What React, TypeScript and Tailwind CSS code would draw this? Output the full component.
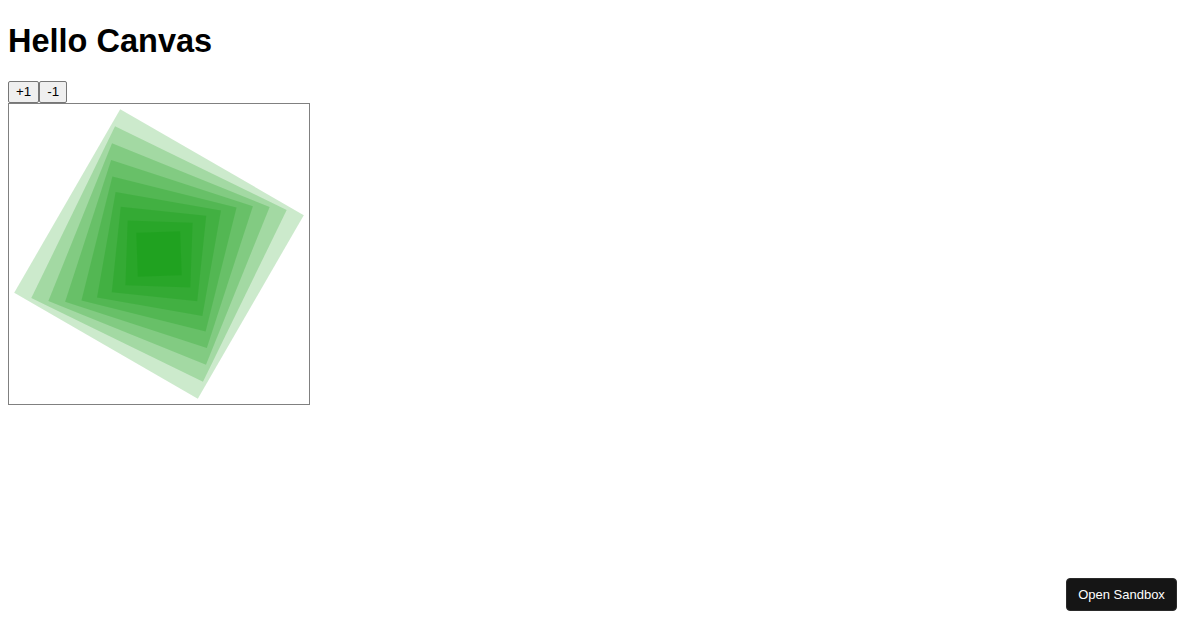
const squares = Array.from({ length: 9 }, (_, i) => ({
  size: 212 - 21 * i,
  angle: 30 - 4 * i,
}));

function Squares() {
  return (
    <svg width="300" height="300" viewBox="0 0 300 300" className="block">
      {squares.map((sq, i) => (
        <rect
          key={i}
          x={150 - sq.size / 2}
          y={150 - sq.size / 2}
          width={sq.size}
          height={sq.size}
          fill="rgb(0,150,0)"
          fillOpacity={0.2}
          transform={`rotate(${sq.angle} 150 150)`}
        />
      ))}
    </svg>
  );
}

export default function App() {
  return (
    <div className="min-h-[630px] bg-white px-2 font-['Liberation_Sans',Arial,sans-serif] text-black">
      <h1 className="pt-[23px] pb-[21px] text-[32.5px] font-bold leading-[37px]">Hello Canvas</h1>
      <div className="flex">
        <button className="h-[22px] rounded-[2px] border border-[#767676] bg-[#efefef] px-[7px] text-[13.33px] leading-[18px]">
          +1
        </button>
        <button className="h-[22px] rounded-[2px] border border-[#767676] bg-[#efefef] px-[7px] text-[13.33px] leading-[18px]">
          -1
        </button>
      </div>
      <div className="w-[302px] border border-[#808080]">
        <Squares />
      </div>

      <button className="fixed right-[23px] bottom-[19px] h-[33px] w-[111px] rounded-[4px] border border-[#2a2a2a] bg-[#151515] font-['Liberation_Sans',Arial,sans-serif] text-[13px] text-white">
        Open Sandbox
      </button>
    </div>
  );
}
